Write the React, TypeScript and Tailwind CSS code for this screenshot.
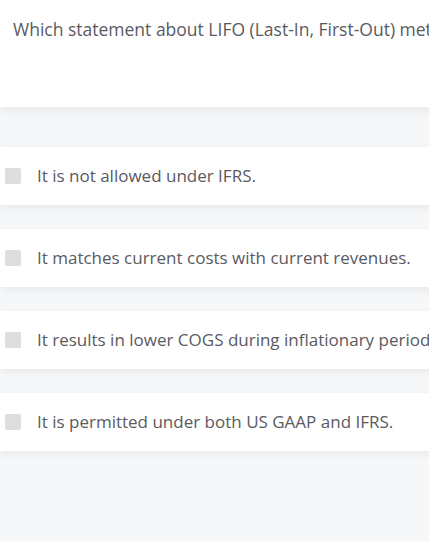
import React from 'react';

const options = [
  'It is not allowed under IFRS.',
  'It matches current costs with current revenues.',
  'It results in lower COGS during inflationary periods.',
  'It is permitted under both US GAAP and IFRS.',
];

const OptionCard = ({ label }: { label: string }) => (
  <div className="flex h-[58px] w-[560px] items-center bg-white shadow-[0_3px_8px_rgba(0,0,0,0.06)]">
    <span className="ml-[5px] h-4 w-4 shrink-0 rounded-[2px] bg-[#dcdddf]" />
    <span className="ml-4 whitespace-nowrap text-[17px] text-[#5a5a5f]">{label}</span>
  </div>
);

export default function App() {
  return (
    <div
      className="h-[541px] w-[429px] overflow-hidden bg-[#f6f7f9]"
      style={{ fontFamily: '"Open Sans", "Noto Sans", sans-serif' }}
    >
      <div className="h-[107px] w-[560px] bg-white pl-[13px] pt-[16px] shadow-[0_4px_10px_rgba(0,0,0,0.06)]">
        <p className="whitespace-nowrap text-[17.5px] leading-[27px] text-[#5a5a5f]">
          Which statement about LIFO (Last-In, First-Out) method is true?
        </p>
      </div>
      <div className="flex flex-col gap-6 pt-10">
        {options.map((o) => (
          <OptionCard key={o} label={o} />
        ))}
      </div>
    </div>
  );
}
